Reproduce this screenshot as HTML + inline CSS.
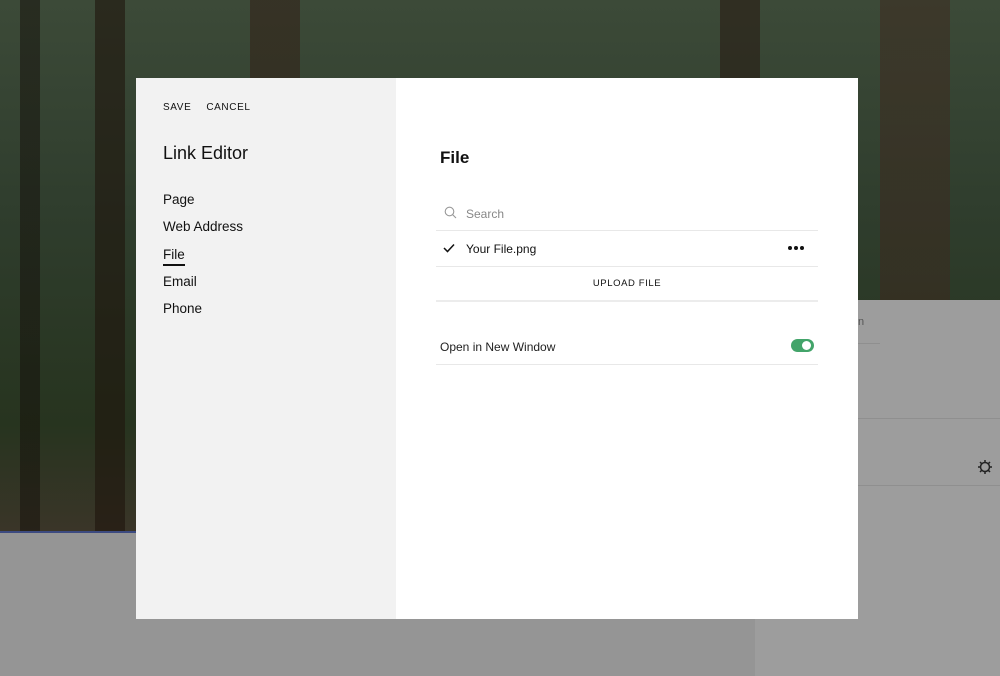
<!DOCTYPE html>
<html><head><style>
*{margin:0;padding:0;box-sizing:border-box}
body{width:1000px;height:676px;overflow:hidden;position:relative;background:#959595;font-family:"Liberation Sans",sans-serif}
.forest{position:absolute;left:0;top:0;width:1000px;height:533px;
background:
linear-gradient(90deg,transparent 0,transparent 20px,rgba(20,15,10,.5) 20px,rgba(20,15,10,.5) 40px,transparent 40px,transparent 95px,rgba(30,20,12,.6) 95px,rgba(30,20,12,.6) 125px,transparent 125px,transparent 250px,rgba(50,35,25,.6) 250px,rgba(50,35,25,.6) 300px,transparent 300px,transparent 720px,rgba(40,28,20,.6) 720px,rgba(40,28,20,.6) 760px,transparent 760px,transparent 880px,rgba(60,40,30,.5) 880px,rgba(60,40,30,.5) 950px,transparent 950px),
linear-gradient(180deg,#3c4a38 0,#2f3d2d 40%,#27341f 80%,#3a3528 100%);border-bottom:2px solid #3c4a80}
.rp{position:absolute;left:755px;top:300px;width:245px;height:376px;background:#9d9d9d}
.rp .l{position:absolute;left:0;right:0;height:1px;background:#8f8f8f}
.modal{position:absolute;left:136px;top:78px;width:722px;height:541px;background:#fff;display:flex}
.side{width:260px;background:#f2f2f2;position:relative}
.main{flex:1;position:relative}
.top{position:absolute;left:27px;top:24px;font-size:10px;letter-spacing:.6px;color:#111}
.top span{margin-right:15px}
h1{position:absolute;left:27px;top:65px;font-size:18px;font-weight:normal;color:#111}
.nav{position:absolute;left:27px;top:114px;font-size:13.5px;color:#111}
.nav div{height:27.3px}
.nav u{text-decoration:none;border-bottom:2px solid #111;padding-bottom:2px}
h2{position:absolute;left:44px;top:70px;font-size:17px;font-weight:bold;color:#111}
.row{position:absolute;left:40px;width:382px;border-bottom:1px solid #e8e8e8;font-size:12px;color:#222}
</style></head><body>
<div class="forest"></div>
<div class="rp"><div class="l" style="top:43px;width:125px"></div><div class="l" style="top:118px"></div><div class="l" style="top:185px"></div>
<span style="position:absolute;left:103px;top:16px;font-size:11px;color:#555">n</span>
<svg style="position:absolute;left:222px;top:159px" width="16" height="16" viewBox="0 0 16 16"><circle cx="8" cy="8" r="4.5" fill="none" stroke="#222" stroke-width="1.5"/><g stroke="#222" stroke-width="1.5"><path d="M8 1v2.5M8 12.5V15M1 8h2.5M12.5 8H15M3 3l1.8 1.8M11.2 11.2L13 13M3 13l1.8-1.8M11.2 4.8L13 3"/></g></svg></div>
<div class="modal">
<div class="side">
<div class="top"><span>SAVE</span><span>CANCEL</span></div>
<h1>Link Editor</h1>
<div class="nav"><div>Page</div><div>Web Address</div><div><u>File</u></div><div>Email</div><div>Phone</div></div>
</div>
<div class="main">
<h2>File</h2>
<div class="row" style="top:118px;height:35px">
<svg style="position:absolute;left:8px;top:10px" width="13" height="13" viewBox="0 0 13 13"><circle cx="5.5" cy="5.5" r="4.3" fill="none" stroke="#999" stroke-width="1.1"/><path d="M8.6 8.6L12 12" stroke="#999" stroke-width="1.1"/></svg>
<span style="position:absolute;left:30px;top:11px;color:#888">Search</span></div>
<div class="row" style="top:153px;height:36px">
<svg style="position:absolute;left:7px;top:12px" width="12" height="10" viewBox="0 0 12 10"><path d="M1 5l3.5 3.5L11 1.5" fill="none" stroke="#111" stroke-width="1.5"/></svg>
<span style="position:absolute;left:30px;top:11px;color:#111">Your File.png</span>
<span style="position:absolute;left:352px;top:15px;width:4px;height:4px;border-radius:2px;background:#111;box-shadow:6px 0 #111,12px 0 #111"></span></div>
<div class="row" style="top:189px;height:35px;border-bottom:2px solid #ececec;text-align:center;font-size:9.5px;letter-spacing:.6px;line-height:34px;color:#111">UPLOAD FILE</div>
<div class="row" style="top:250px;height:37px">
<span style="position:absolute;left:4px;top:12px;color:#222">Open in New Window</span>
<span style="position:absolute;left:355px;top:11px;width:23px;height:13px;border-radius:7px;background:#43a46a"></span>
<span style="position:absolute;left:366px;top:13px;width:9px;height:9px;border-radius:5px;background:#fff"></span></div>
</div>
</div>
</body></html>
